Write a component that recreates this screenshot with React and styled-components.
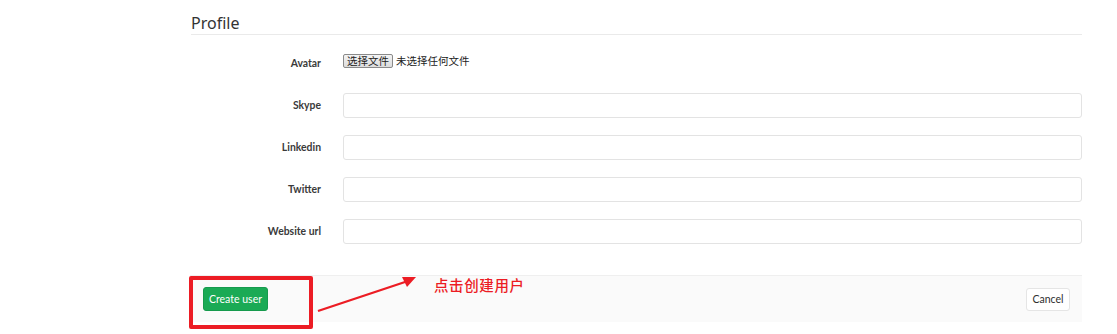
import React from "react";
import styled, { createGlobalStyle } from "styled-components";

const Global = createGlobalStyle`
  html, body { margin: 0; padding: 0; background: #fff; }
  body { font-family: "Noto Sans", "Open Sans", "Noto Sans CJK SC", sans-serif; color: #2e2e2e; }
  * { box-sizing: border-box; }
`;

const Page = styled.div`
  position: relative;
  width: 1117px;
  height: 334px;
  padding-left: 190px;
  padding-top: 10px;
  overflow: hidden;
`;

const Main = styled.div`
  width: 892px;
`;

const Heading = styled.h3`
  margin: 0 0 0 1px;
  font-size: 16px;
  font-weight: 400;
  line-height: 26px;
  color: #333;
  border-bottom: 1px solid #eaeaea;
  height: 25px;
  overflow: visible;
`;

const Fields = styled.div`
  padding-top: 16px;
  display: flex;
  flex-direction: column;
  gap: 17px;
`;

const Row = styled.div`
  display: grid;
  grid-template-columns: 131px 739px;
  column-gap: 22px;
  align-items: start;
  height: 25px;
`;

const Label = styled.label`
  text-align: right;
  font-family: Lato, "Noto Sans", sans-serif;
  font-size: 10.4px;
  font-weight: 700;
  color: #3a3a3a;
  line-height: 25px;
`;

const TextInput = styled.input`
  width: 739px;
  height: 25px;
  border: 1px solid #e3e3e3;
  border-radius: 3px;
  background: #fff;
  padding: 0 8px;
  font: inherit;
  outline: none;
`;

const FileWrap = styled.div`
  display: flex;
  align-items: center;
  gap: 3px;
  padding-top: 2px;
  font-family: "Noto Sans CJK SC", sans-serif;
  font-size: 10.5px;
  color: #222;
`;

const FileButton = styled.button`
  height: 14px;
  padding: 0 3px;
  border: 1px solid #8a8a8a;
  border-radius: 2px;
  background: linear-gradient(#f4f4f4, #dcdcdc);
  font-family: "Noto Sans CJK SC", sans-serif;
  font-size: 10.5px;
  line-height: 12px;
  color: #222;
`;

const Footer = styled.div`
  margin-top: 31px;
  height: 47px;
  background: #fafafa;
  border-top: 1px solid #efefef;
  display: flex;
  justify-content: space-between;
  align-items: flex-start;
  padding: 11px 12px 0 13px;
`;

const Button = styled.button`
  height: ${(p) => (p.$primary ? 24 : 23)}px;
  width: ${(p) => (p.$primary ? 65 : 44)}px;
  padding: 0;
  border-radius: 3px;
  border: 1px solid ${(p) => (p.$primary ? "#169a4d" : "#e5e5e5")};
  background: ${(p) => (p.$primary ? "#1aaa55" : "#fff")};
  color: ${(p) => (p.$primary ? "#fff" : "#2e2e2e")};
  font-family: Lato, "Noto Sans", sans-serif;
  font-size: 10.5px;
  line-height: 1;
  margin-top: ${(p) => (p.$primary ? 0 : 1)}px;
`;

const MarkBox = styled.div`
  position: absolute;
  left: 189px;
  top: 276px;
  width: 124px;
  height: 53px;
  border: 4px solid #ec1c24;
  border-radius: 2px;
  pointer-events: none;
`;

const Arrow = styled.svg`
  position: absolute;
  left: 310px;
  top: 268px;
  pointer-events: none;
`;

const Note = styled.div`
  position: absolute;
  left: 434px;
  top: 274px;
  font-family: "Noto Sans CJK SC", sans-serif;
  font-size: 14.5px;
  font-weight: 500;
  color: #ec1c24;
  letter-spacing: 0.6px;
  pointer-events: none;
`;

const fields = ["Skype", "Linkedin", "Twitter", "Website url"];

export default function App() {
  return (
    <>
      <Global />
      <Page>
        <Main>
          <Heading>Profile</Heading>
          <Fields>
            <Row>
              <Label>Avatar</Label>
              <FileWrap>
                <FileButton type="button">选择文件</FileButton>
                <span>未选择任何文件</span>
              </FileWrap>
            </Row>
            {fields.map((f) => (
              <Row key={f}>
                <Label>{f}</Label>
                <TextInput type="text" />
              </Row>
            ))}
          </Fields>
          <Footer>
            <Button $primary type="button">Create user</Button>
            <Button type="button">Cancel</Button>
          </Footer>
        </Main>
        <MarkBox />
        <Arrow width="120" height="60" viewBox="0 0 120 60">
          <line x1="8" y1="43" x2="98" y2="13" stroke="#ec1c24" strokeWidth="2.2" />
          <polygon points="106,9 92,9 97,19" fill="#ec1c24" />
        </Arrow>
        <Note>点击创建用户</Note>
      </Page>
    </>
  );
}
